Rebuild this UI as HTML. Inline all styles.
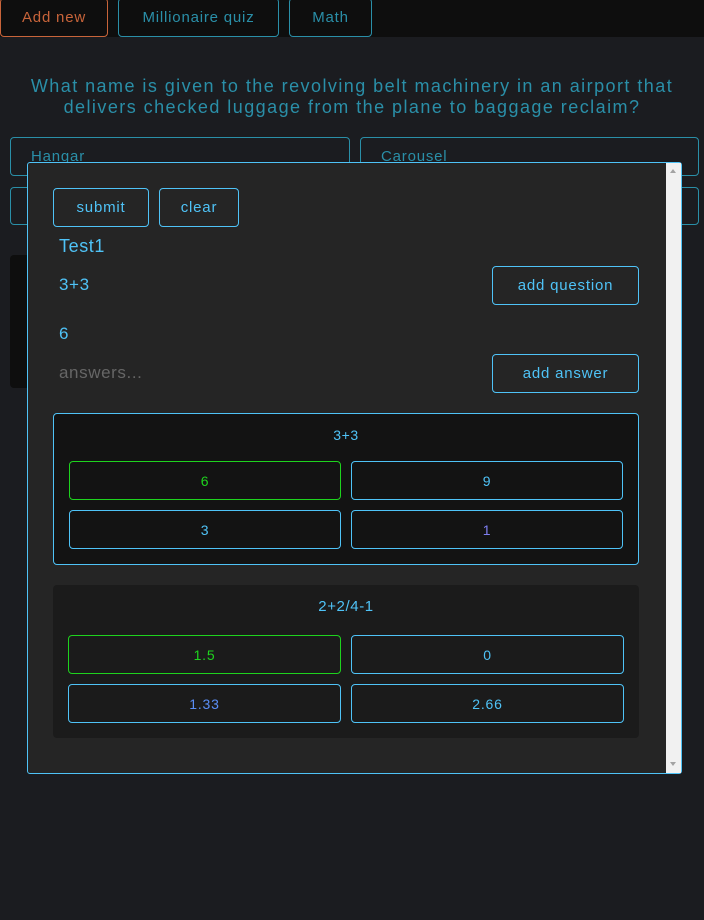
<!DOCTYPE html>
<html><head><style>
*{box-sizing:border-box;margin:0;padding:0}
body{width:704px;height:920px;background:#1b1c20;font-family:"Liberation Sans",sans-serif;position:relative;overflow:hidden;color:#4fc3f7;letter-spacing:0.6px}
.abs{position:absolute}
.btn{position:absolute;border:1px solid;border-radius:4px;display:flex;align-items:center;justify-content:center;font-size:15px;letter-spacing:0.8px}
.c{color:#4fc3f7;border-color:#4fc3f7}
.g{color:#1ed31e;border-color:#1ed31e}
</style></head><body>
<div class="abs" style="left:0;top:0;width:704px;height:37px;background:#0e0e0e"></div>
<div class="btn" style="left:0;top:-2px;width:108px;height:39px;color:#c8643a;border-color:#c8643a">Add new</div>
<div class="btn" style="left:118px;top:-2px;width:161px;height:39px;color:#2a8fa8;border-color:#2a8fa8">Millionaire quiz</div>
<div class="btn" style="left:289px;top:-2px;width:83px;height:39px;color:#2a8fa8;border-color:#2a8fa8">Math</div>
<div class="abs" style="left:0;top:76px;width:704px;text-align:center;font-size:18px;line-height:21px;color:#2a8fa8;letter-spacing:1.45px">What name is given to the revolving belt machinery in an airport that<br>delivers checked luggage from the plane to baggage reclaim?</div>
<div class="btn" style="left:10px;top:137px;width:340px;height:39px;border-color:#2a8fa8;color:#2a8fa8;justify-content:flex-start;padding-left:20px;align-items:flex-start;padding-top:10px">Hangar</div>
<div class="btn" style="left:360px;top:137px;width:339px;height:39px;border-color:#2a8fa8;color:#2a8fa8;justify-content:flex-start;padding-left:20px;align-items:flex-start;padding-top:10px">Carousel</div>
<div class="btn" style="left:10px;top:187px;width:340px;height:38px;border-color:#2a8fa8"></div>
<div class="btn" style="left:360px;top:187px;width:339px;height:38px;border-color:#2a8fa8"></div>
<div class="abs" style="left:10px;top:255px;width:30px;height:133px;background:#0e0e0e;border-radius:4px"></div>

<div class="abs" style="left:27px;top:162px;width:655px;height:612px;background:#252525;border:1px solid #4fc3f7;border-radius:3px"></div>
<div class="abs" style="left:666px;top:163px;width:15px;height:610px;background:#f1f1f1"></div>
<div class="abs" style="left:670px;top:169px;width:0;height:0;border-left:3px solid transparent;border-right:3px solid transparent;border-bottom:4px solid #a3a3a3"></div>
<div class="abs" style="left:670px;top:762px;width:0;height:0;border-left:3px solid transparent;border-right:3px solid transparent;border-top:4px solid #a3a3a3"></div>

<div class="btn c" style="left:53px;top:188px;width:96px;height:39px">submit</div>
<div class="btn c" style="left:159px;top:188px;width:80px;height:39px">clear</div>
<div class="abs" style="left:59px;top:236px;font-size:18px">Test1</div>
<div class="abs" style="left:59px;top:275px;font-size:17px">3+3</div>
<div class="btn c" style="left:492px;top:266px;width:147px;height:39px">add question</div>
<div class="abs" style="left:59px;top:324px;font-size:17px">6</div>
<div class="abs" style="left:59px;top:363px;font-size:17px;color:#666">answers...</div>
<div class="btn c" style="left:492px;top:354px;width:147px;height:39px">add answer</div>

<div class="abs" style="left:53px;top:413px;width:586px;height:152px;background:#131313;border:1px solid #4fc3f7;border-radius:4px"></div>
<div class="abs" style="left:53px;top:427px;width:586px;text-align:center;font-size:14px">3+3</div>
<div class="btn g" style="left:69px;top:461px;width:272px;height:39px;background:#131313;font-size:14px">6</div>
<div class="btn c" style="left:351px;top:461px;width:272px;height:39px;font-size:14px">9</div>
<div class="btn c" style="left:69px;top:510px;width:272px;height:39px;font-size:14px">3</div>
<div class="btn c" style="left:351px;top:510px;width:272px;height:39px;font-size:14px;color:#7e7ef0">1</div>

<div class="abs" style="left:53px;top:585px;width:586px;height:153px;background:#1b1b1b;border-radius:4px"></div>
<div class="abs" style="left:53px;top:598px;width:586px;text-align:center;font-size:15px">2+2/4-1</div>
<div class="btn g" style="left:68px;top:635px;width:273px;height:39px;font-size:14px">1.5</div>
<div class="btn c" style="left:351px;top:635px;width:273px;height:39px;font-size:14px">0</div>
<div class="btn c" style="left:68px;top:684px;width:273px;height:39px;font-size:14px;color:#5a8ef5">1.33</div>
<div class="btn c" style="left:351px;top:684px;width:273px;height:39px;font-size:14px">2.66</div>
</body></html>
